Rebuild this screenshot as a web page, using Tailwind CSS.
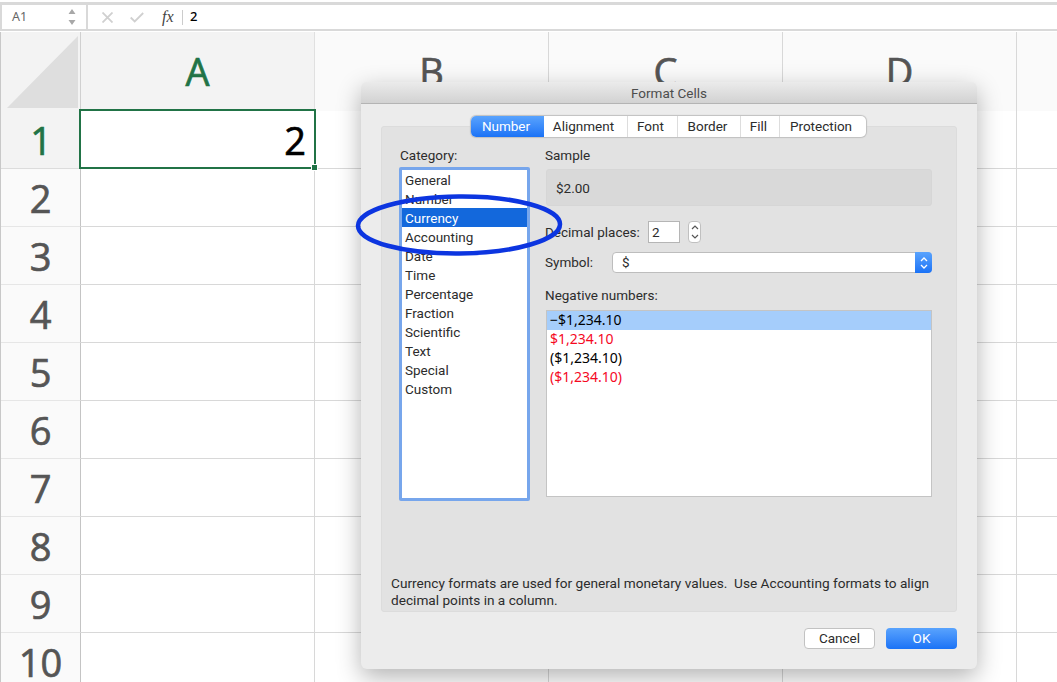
<!DOCTYPE html>
<html lang="en">
<head>
<meta charset="UTF-8">
<title>Format Cells</title>
<script src="https://cdn.jsdelivr.net/npm/@tailwindcss/browser@4"></script>
</head>
<body class="relative w-[1057px] h-[682px] overflow-hidden bg-white font-['Noto_Sans',sans-serif]">

  <!-- Formula bar -->
  <div class="flex h-[31px] mb-px bg-[#d9d9d9] pt-[3px] pl-[2px] border-t-2 border-white box-border">
    <div class="flex items-center justify-between w-[84px] h-[24px] bg-white px-[10px] text-[12.5px] text-[#666]">
      <span>A1</span>
      <svg width="8" height="18" viewBox="0 0 8 18"><path d="M4 1l3.5 5h-7zM4 17l3.5-5h-7z" fill="#a8a8a8"/></svg>
    </div>
    <div class="flex items-center flex-1 h-[24px] ml-[2px] bg-white">
      <svg class="ml-[14px]" width="11" height="11" viewBox="0 0 11 11"><path d="M.5.500l10 10M10.500.5l-10 10" stroke="#d0d0d0" stroke-width="1.8"/></svg>
      <svg class="ml-[17px]" width="14" height="11" viewBox="0 0 14 11"><path d="M.7 5.500l4 4 8.500-8.500" stroke="#d0d0d0" stroke-width="1.8" fill="none"/></svg>
      <span class="ml-[18px] w-[20px] font-['Liberation_Serif',serif] italic text-[16px] text-[#444]">fx</span>
      <div class="w-px h-[15px] bg-[#ccc]"></div>
      <span class="ml-[7px] text-[13px] font-medium text-black">2</span>
    </div>
  </div>

  <!-- Sheet -->
  <div class="grid grid-cols-[80px_repeat(4,234px)_41px] grid-rows-[79px_repeat(10,58px)] h-[650px] border-l border-[#c8c8c8] text-[38px] [-webkit-text-stroke:0.7px_currentColor] text-[#555] font-['Open_Sans',sans-serif]">
    <div class="relative bg-[#f3f3f3] border-r border-[#d0d0d0]">
      <svg class="absolute left-[6px] top-[4px]" width="71" height="72" viewBox="0 0 71 72"><path d="M71 0v72H0z" fill="#dedede"/></svg>
    </div>
    <div class="flex items-center justify-center bg-[#f3f3f3] text-[#217346] border-r border-[#e0e0e0]">A</div>
    <div class="flex items-center justify-center bg-[#fafafa] border-r border-[#d8d8d8]">B</div>
    <div class="flex items-center justify-center bg-[#fafafa] border-r border-[#d8d8d8]">C</div>
    <div class="flex items-center justify-center bg-[#fafafa] border-r border-[#d8d8d8]">D</div>
    <div class="bg-[#fafafa]"></div>

    <div class="flex items-center justify-center pt-px bg-[#f3f3f3] text-[#217346] border-b border-[#dcdcdc]">1</div>
    <div class="relative flex items-center justify-end -ml-[2px] -mt-[2px] -mr-px pr-[8px] pt-[3px] border-2 border-[#217346] bg-white text-black z-10">2
      <div class="absolute -right-[4px] -bottom-[4px] w-[5px] h-[5px] bg-[#217346] border border-white box-content"></div>
    </div>
    <div class="border-r border-b border-[#d8d8d8]"></div>
    <div class="border-r border-b border-[#d8d8d8]"></div>
    <div class="border-r border-b border-[#d8d8d8]"></div>
    <div class="border-b border-[#d8d8d8]"></div>

    <div class="flex items-center justify-center pt-px bg-[#fafafa] border-r border-r-[#c4c4c4] border-b border-b-[#e6e6e6]">2</div>
    <div class="border-r border-b border-[#d8d8d8]"></div><div class="border-r border-b border-[#d8d8d8]"></div><div class="border-r border-b border-[#d8d8d8]"></div><div class="border-r border-b border-[#d8d8d8]"></div><div class="border-b border-[#d8d8d8]"></div>
    <div class="flex items-center justify-center pt-px bg-[#fafafa] border-r border-r-[#c4c4c4] border-b border-b-[#e6e6e6]">3</div>
    <div class="border-r border-b border-[#d8d8d8]"></div><div class="border-r border-b border-[#d8d8d8]"></div><div class="border-r border-b border-[#d8d8d8]"></div><div class="border-r border-b border-[#d8d8d8]"></div><div class="border-b border-[#d8d8d8]"></div>
    <div class="flex items-center justify-center pt-px bg-[#fafafa] border-r border-r-[#c4c4c4] border-b border-b-[#e6e6e6]">4</div>
    <div class="border-r border-b border-[#d8d8d8]"></div><div class="border-r border-b border-[#d8d8d8]"></div><div class="border-r border-b border-[#d8d8d8]"></div><div class="border-r border-b border-[#d8d8d8]"></div><div class="border-b border-[#d8d8d8]"></div>
    <div class="flex items-center justify-center pt-px bg-[#fafafa] border-r border-r-[#c4c4c4] border-b border-b-[#e6e6e6]">5</div>
    <div class="border-r border-b border-[#d8d8d8]"></div><div class="border-r border-b border-[#d8d8d8]"></div><div class="border-r border-b border-[#d8d8d8]"></div><div class="border-r border-b border-[#d8d8d8]"></div><div class="border-b border-[#d8d8d8]"></div>
    <div class="flex items-center justify-center pt-px bg-[#fafafa] border-r border-r-[#c4c4c4] border-b border-b-[#e6e6e6]">6</div>
    <div class="border-r border-b border-[#d8d8d8]"></div><div class="border-r border-b border-[#d8d8d8]"></div><div class="border-r border-b border-[#d8d8d8]"></div><div class="border-r border-b border-[#d8d8d8]"></div><div class="border-b border-[#d8d8d8]"></div>
    <div class="flex items-center justify-center pt-px bg-[#fafafa] border-r border-r-[#c4c4c4] border-b border-b-[#e6e6e6]">7</div>
    <div class="border-r border-b border-[#d8d8d8]"></div><div class="border-r border-b border-[#d8d8d8]"></div><div class="border-r border-b border-[#d8d8d8]"></div><div class="border-r border-b border-[#d8d8d8]"></div><div class="border-b border-[#d8d8d8]"></div>
    <div class="flex items-center justify-center pt-px bg-[#fafafa] border-r border-r-[#c4c4c4] border-b border-b-[#e6e6e6]">8</div>
    <div class="border-r border-b border-[#d8d8d8]"></div><div class="border-r border-b border-[#d8d8d8]"></div><div class="border-r border-b border-[#d8d8d8]"></div><div class="border-r border-b border-[#d8d8d8]"></div><div class="border-b border-[#d8d8d8]"></div>
    <div class="flex items-center justify-center pt-px bg-[#fafafa] border-r border-r-[#c4c4c4] border-b border-b-[#e6e6e6]">9</div>
    <div class="border-r border-b border-[#d8d8d8]"></div><div class="border-r border-b border-[#d8d8d8]"></div><div class="border-r border-b border-[#d8d8d8]"></div><div class="border-r border-b border-[#d8d8d8]"></div><div class="border-b border-[#d8d8d8]"></div>
    <div class="flex items-center justify-center pt-px bg-[#fafafa] border-r border-r-[#c4c4c4] border-b border-b-[#e6e6e6]">10</div>
    <div class="border-r border-b border-[#d8d8d8]"></div><div class="border-r border-b border-[#d8d8d8]"></div><div class="border-r border-b border-[#d8d8d8]"></div><div class="border-r border-b border-[#d8d8d8]"></div><div class="border-b border-[#d8d8d8]"></div>
  </div>

  <!-- Format Cells dialog -->
  <div class="absolute left-[361px] top-[82px] z-20 flex flex-col w-[616px] h-[587px] rounded-[6px] bg-[#ececec] shadow-[0_8px_24px_rgba(0,0,0,0.3)] text-[13.5px] text-[#2c2c2c] font-['Roboto',sans-serif]">
    <div class="flex items-center justify-center h-[22px] pt-px shrink-0 rounded-t-[6px] border-b border-[#b4b4b4] bg-gradient-to-b from-[#ebebeb] to-[#d2d2d2] text-[#4d4d4d]">Format Cells</div>

    <div class="relative mx-[20px] mt-[22px] h-[486px] shrink-0 rounded-[3px] border border-[#dcdcdc] bg-[#e2e2e2]">
      <!-- Tabs -->
      <div class="absolute left-[89px] -top-[11px] flex h-[21px] rounded-[5px] bg-white shadow-[0_0_1px_1px_#c0c0c0]">
        <div class="flex items-center justify-center w-[73px] pr-[3px] rounded-l-[5px] bg-gradient-to-b from-[#59a3fd] to-[#1a72f6] text-white">Number</div>
        <div class="flex items-center justify-center w-[84px] pr-[4px] border-r border-[#ddd]">Alignment</div>
        <div class="flex items-center justify-center w-[50px] pr-[4px] border-r border-[#ddd]">Font</div>
        <div class="flex items-center justify-center w-[63px] pr-[3px] border-r border-[#ddd]">Border</div>
        <div class="flex items-center justify-center w-[39px] pr-[3px] border-r border-[#ddd]">Fill</div>
        <div class="flex items-center justify-center w-[86px] pr-[4px]">Protection</div>
      </div>

      <div class="flex pl-[18px] pt-[20px] h-[374px]">
        <!-- Category -->
        <div class="w-[130px]">
          <div class="h-[18px] leading-[16px]">Category:</div>
          <div class="mt-[2px] -ml-px w-[131px] h-[334px] rounded-[2px] border-[3px] border-[#77a6ec] bg-white leading-[21px]">
            <div class="h-[19px] pl-[3px]">General</div>
            <div class="h-[19px] pl-[3px]">Number</div>
            <div class="h-[19px] pl-[3px] bg-[#1368dc] text-white">Currency</div>
            <div class="h-[19px] pl-[3px]">Accounting</div>
            <div class="h-[19px] pl-[3px]">Date</div>
            <div class="h-[19px] pl-[3px]">Time</div>
            <div class="h-[19px] pl-[3px]">Percentage</div>
            <div class="h-[19px] pl-[3px]">Fraction</div>
            <div class="h-[19px] pl-[3px]">Scientific</div>
            <div class="h-[19px] pl-[3px]">Text</div>
            <div class="h-[19px] pl-[3px]">Special</div>
            <div class="h-[19px] pl-[3px]">Custom</div>
          </div>
        </div>

        <!-- Options -->
        <div class="ml-[16px] w-[386px]">
          <div class="-ml-px h-[18px] leading-[16px]">Sample</div>
          <div class="flex items-center mt-[4px] h-[37px] pl-[9px] pt-px rounded-[3px] border border-[#d6d6d6] bg-[#d9d9d9]">$2.00</div>
          <div class="flex items-center -ml-px mt-[15px] h-[22px]">
            <span class="w-[103px] pt-px">Decimal places:</span>
            <div class="flex items-center w-[32px] h-[22px] pl-[3px] border border-[#b5b5b5] bg-white">2</div>
            <div class="flex items-center justify-center ml-[8px] w-[13px] h-[22px] rounded-[4px] border border-[#c0c0c0] bg-white">
              <svg width="8" height="16" viewBox="0 0 8 16"><path d="M1 5l3-3 3 3M1 11l3 3 3-3" stroke="#555" stroke-width="1.2" fill="none"/></svg>
            </div>
          </div>
          <div class="flex items-center -ml-px mt-[9px] h-[21px]">
            <span class="w-[67px]">Symbol:</span>
            <div class="flex flex-1 items-center justify-between h-[21px] pl-[9px] rounded-[4px] border border-[#bdbdbd] bg-white">
              <span>$</span>
              <div class="flex items-center justify-center w-[17px] h-[21px] -mr-px rounded-r-[4px] bg-gradient-to-b from-[#59a3fd] to-[#1a72f6]">
                <svg width="8" height="16" viewBox="0 0 8 16"><path d="M1 6l3-3 3 3M1 10l3 3 3-3" stroke="#fff" stroke-width="1.3" fill="none"/></svg>
              </div>
            </div>
          </div>
          <div class="-ml-px mt-[13px] h-[18px] leading-[18px]">Negative numbers:</div>
          <div class="mt-[6px] h-[187px] border border-[#c4c4c4] bg-white leading-[17px] text-[14px] font-['Noto_Sans',sans-serif]">
            <div class="h-[19px] pl-[3px] bg-[#a5cdfb] text-black">−$1,234.10</div>
            <div class="h-[19px] pl-[3px] text-[#f5091f]">$1,234.10</div>
            <div class="h-[19px] pl-[3px] text-black">($1,234.10)</div>
            <div class="h-[19px] pl-[3px] text-[#f5091f]">($1,234.10)</div>
          </div>
        </div>
      </div>

      <p class="absolute left-[9px] bottom-[2px] w-[546px] text-[13.65px] leading-[17px] whitespace-pre-wrap">Currency formats are used for general monetary values.  Use Accounting formats to align decimal points in a column.</p>
    </div>

    <!-- Buttons -->
    <div class="flex justify-end gap-[11px] mt-[16px] mr-[20px]">
      <div class="flex items-center justify-center w-[71px] h-[21px] rounded-[4px] border border-[#c2c2c2] bg-white">Cancel</div>
      <div class="flex items-center justify-center w-[71px] h-[21px] rounded-[4px] bg-gradient-to-b from-[#59a3fd] to-[#1a72f6] text-white">OK</div>
    </div>
  </div>

  <!-- Hand-drawn annotation -->
  <svg class="absolute left-[354px] top-[192px] z-30" width="210" height="66" viewBox="0 0 210 66">
    <ellipse cx="105" cy="33" rx="101" ry="28.5" fill="none" stroke="#0c35e0" stroke-width="4.5" transform="rotate(-0.5 105 33)"/>
  </svg>
</body>
</html>
